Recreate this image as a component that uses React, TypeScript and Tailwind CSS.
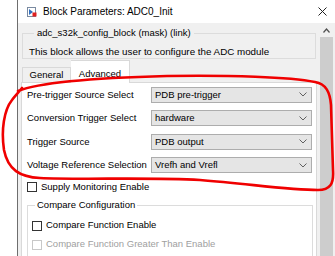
import React from "react";

const FONT = "font-['Liberation_Sans',Arial,sans-serif]";

const ROWS = [
  { label: "Pre-trigger Source Select", value: "PDB pre-trigger" },
  { label: "Conversion Trigger Select", value: "hardware" },
  { label: "Trigger Source", value: "PDB output" },
  { label: "Voltage Reference Selection", value: "Vrefh and Vrefl" },
];

function BlockIcon() {
  return (
    <svg width="10" height="10" viewBox="0 0 10 10">
      <rect x="0.5" y="0.5" width="8" height="9" fill="#ffffff" stroke="#7a8aa0" />
      <path d="M2 2 L6 5 L2 8 Z" fill="#2f6fc0" />
      <rect x="5.5" y="5.5" width="4" height="4" fill="#e02020" />
    </svg>
  );
}

function Chevron() {
  return (
    <svg width="8" height="5" viewBox="0 0 8 5">
      <path d="M0.5 0.5 L4 4 L7.5 0.5" fill="none" stroke="#606060" strokeWidth="1" />
    </svg>
  );
}

function Checkbox({ disabled }: { disabled?: boolean }) {
  return (
    <span
      className={`w-[10px] h-[10px] border bg-white shrink-0 ${disabled ? "border-[#c8c8c8]" : "border-[#333333]"}`}
    />
  );
}

export default function App() {
  return (
    <div className={`relative w-[335px] h-[256px] overflow-hidden bg-white text-[9.5px] text-black ${FONT}`}>
      <div className="ml-[17px] h-full border-l border-[#6e6e6e] flex flex-col">
        {/* Title bar */}
        <div className="h-[23px] bg-white flex items-center pl-[9px] shrink-0">
          <BlockIcon />
          <span className="ml-[6px] text-[10px]">Block Parameters: ADC0_Init</span>
          <svg className="ml-auto mr-[8px]" width="9" height="9" viewBox="0 0 9 9">
            <path d="M0.5 0.5 L8.5 8.5 M8.5 0.5 L0.5 8.5" stroke="#222" strokeWidth="1" />
          </svg>
        </div>

        {/* Body */}
        <div className="flex-1 bg-[#f0f0f0] flex min-h-0">
          <div className="w-[300px] pt-[4px] flex flex-col">
            <fieldset className="ml-[4px] mr-[2px] border border-[#dcdcdc] h-[37px] pl-[6px]">
              <legend className="ml-[5px] px-[3px] leading-[12px]">adc_s32k_config_block (mask) (link)</legend>
              <div className="mt-[7px] leading-[12px] text-[9.8px]">This block allows the user to configure the ADC module</div>
            </fieldset>

            {/* Tabs */}
            <div className="mt-[1px] ml-[4px] flex items-end h-[23px]">
              <div className="h-[15px] w-[49px] border border-b-0 border-[#d9d9d9] bg-[#f0f0f0] flex items-center justify-center">
                General
              </div>
              <div className="h-[23px] w-[59px] border border-b-0 border-l-0 border-[#d9d9d9] bg-white flex items-end justify-center pb-[4px] -mb-px relative leading-[11px]">
                Advanced
              </div>
            </div>

            {/* Panel */}
            <div className="ml-[3px] mr-[1px] flex-1 border border-[#d9d9d9] bg-white flex flex-col pl-[5px]">
              {ROWS.map((r) => (
                <div key={r.label} className="h-[23.5px] flex items-center">
                  <span className="w-[124px] shrink-0">{r.label}</span>
                  <div className="w-[161px] h-[16px] border border-[#adadad] bg-[#e5e5e5] flex items-center pl-[3px] pr-[4px]">
                    <span className="flex-1">{r.value}</span>
                    <Chevron />
                  </div>
                </div>
              ))}
              <div className="h-[18px] mt-[1px] flex items-center gap-[4px]">
                <Checkbox />
                <span>Supply Monitoring Enable</span>
              </div>
              <fieldset className="mt-[3px] mr-[3px] border border-[#dcdcdc] h-[80px] pl-[4px]">
                <legend className="ml-[3px] px-[2px] leading-[12px]">Compare Configuration</legend>
                <div className="h-[19px] mt-[5px] flex items-center gap-[4px]">
                  <Checkbox />
                  <span>Compare Function Enable</span>
                </div>
                <div className="h-[19px] flex items-center gap-[4px]">
                  <Checkbox disabled />
                  <span className="text-[#a0a0a0]">Compare Function Greater Than Enable</span>
                </div>
              </fieldset>
            </div>
          </div>

          {/* Scrollbar */}
          <div className="w-[17px] bg-[#f0f0f0] flex flex-col">
            <div className="h-[14px] flex items-center justify-center">
              <svg width="7" height="5" viewBox="0 0 7 5">
                <path d="M0.5 4.5 L3.5 1 L6.5 4.5" fill="none" stroke="#505050" strokeWidth="1.2" />
              </svg>
            </div>
            <div className="flex-1 mx-[2px] bg-[#cdcdcd]" />
          </div>
        </div>
      </div>

      {/* Red hand-drawn annotation */}
      <svg className="absolute inset-0 pointer-events-none" width="335" height="256" viewBox="0 0 335 256">
        <path
          d="M18 91 C40 82, 90 78, 167 76 C230 75, 290 77, 315 82 C326 84, 330 92, 331 105 L333 170 C334 184, 330 190, 318 190 C290 190, 250 184, 200 180 C150 177, 80 180, 40 178 C20 177, 8 170, 4 150 C1 130, 4 110, 12 100 C15 96, 18 93, 22 88"
          fill="none"
          stroke="#f00000"
          strokeWidth="2.6"
          strokeLinecap="round"
          strokeLinejoin="round"
        />
      </svg>
    </div>
  );
}
